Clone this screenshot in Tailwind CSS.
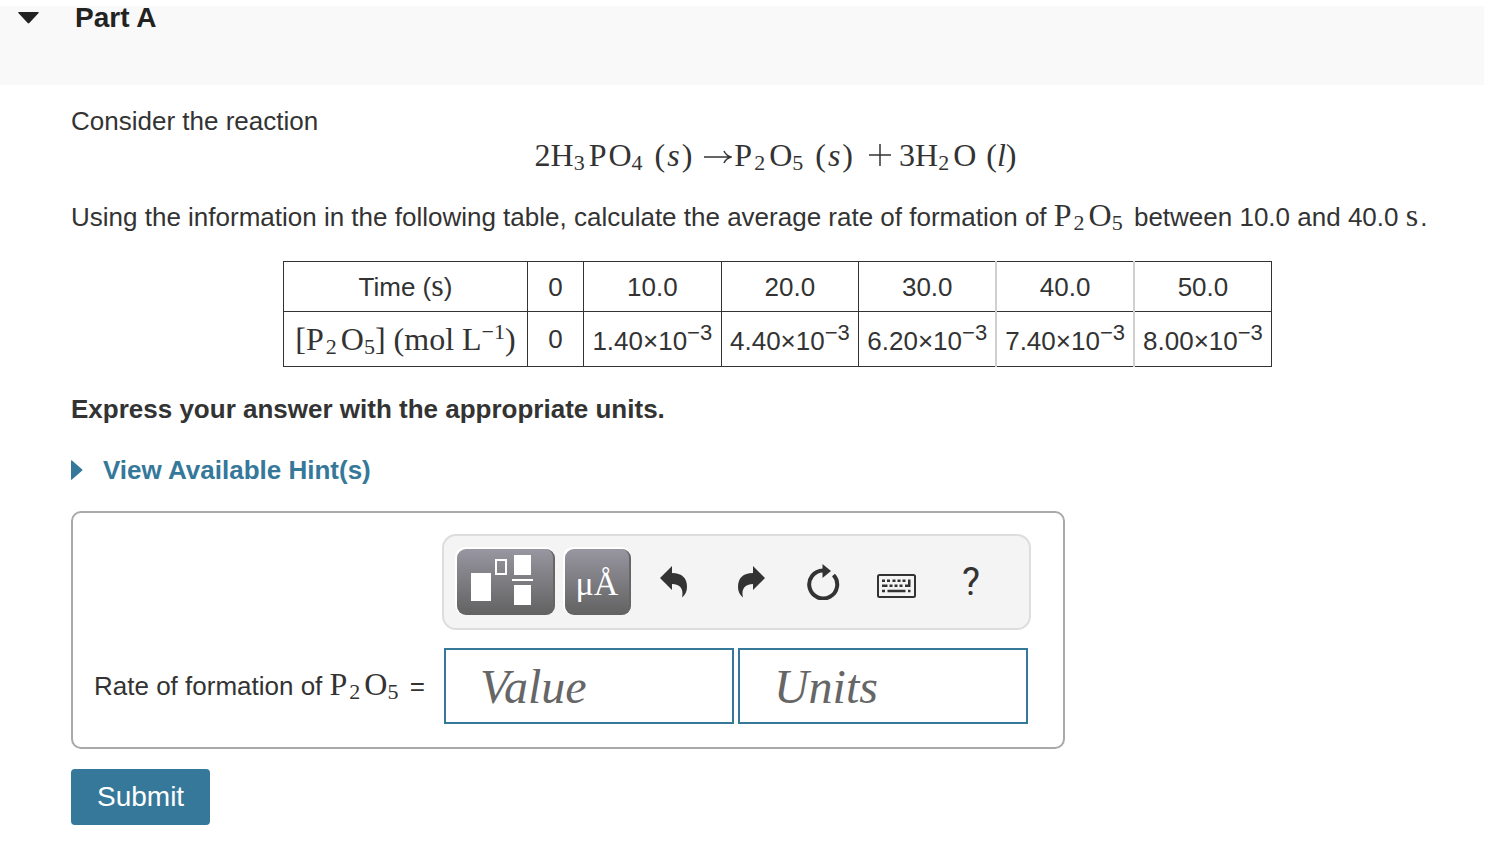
<!DOCTYPE html>
<html lang="en">
<head>
  <meta charset="UTF-8">
  <meta name="viewport" content="width=device-width, initial-scale=1">
  <title>Part A</title>
  <script src="https://cdn.jsdelivr.net/npm/@tailwindcss/browser@4"></script>
</head>
<body class="bg-white font-['Liberation_Sans',Arial,sans-serif] text-[26px] leading-9 text-[#333]">
  <!-- Part header -->
  <header class="mt-1.5 mr-[18px] h-[79px] bg-[#f9f9f9]">
    <button type="button" class="flex items-center pl-[18px] h-6 text-[28px] font-bold text-[#222]" aria-expanded="true">
      <svg class="w-[21px] h-3 mr-9" viewBox="0 0 21 12" fill="currentColor"><path d="M1 0h19q1.500 0 .4 1.300L11.300 11q-.8.900-1.600 0L.6 1.300Q-.5 0 1 0z"/></svg>
      Part A
    </button>
  </header>

  <main class="pl-[71px] pr-[18px] pt-[18px] pb-6">
    <p>Consider the reaction</p>
    <!-- Reaction -->
    <p class="flex justify-center items-baseline pb-1 pr-1 font-['Liberation_Serif',serif] text-[32px] leading-8 whitespace-nowrap">
      <span>2H<sub class="-bottom-1 text-[22px] mr-1">3</sub>P<span class="ml-0.5">O</span><sub class="-bottom-1 text-[22px]">4</sub></span>
      <span class="ml-3">(<i class="mx-0.5">s</i>)</span>
      <svg class="w-7 h-4 ml-3 mr-0.5" viewBox="0 0 28 16" fill="none" stroke="currentColor" stroke-width="1.500"><path d="M0 7h27M20 1q2 4.500 7 6-5 1.500-7 6"/></svg>
      <span>P<sub class="-bottom-1 text-[22px] ml-0.5 mr-1">2</sub>O<sub class="-bottom-1 text-[22px]">5</sub></span>
      <span class="ml-3">(<i class="mx-0.5">s</i>)</span>
      <svg class="w-[22px] h-[22px] ml-4 mr-2 self-center" viewBox="0 0 22 22" fill="none" stroke="currentColor" stroke-width="1.500"><path d="M11 0v22M0 11h22"/></svg>
      <span>3H<sub class="-bottom-1 text-[22px] mr-1">2</sub>O</span>
      <span class="ml-2.5">(<i>l</i>)</span>
    </p>
    <p class="mt-6">Using the information in the following table, calculate the average rate of formation of <span class="font-['Liberation_Serif',serif] text-[32px] leading-none">P<sub class="-bottom-1 text-[22px] ml-0.5 mr-1">2</sub>O<sub class="-bottom-1 text-[22px] mr-1">5</sub></span> between 10.0 and 40.0 <span class="mr-0.5 font-['Liberation_Serif',serif] text-[32px] leading-none">s</span>.</p>

    <!-- Data -->
    <table class="mx-auto mt-[26px] table-fixed w-[989px] border-collapse border border-[#333] text-center whitespace-nowrap">
      <colgroup>
        <col class="w-[244px]">
        <col class="w-14">
        <col span="5">
      </colgroup>
      <tbody>
        <tr class="h-[50px] border-b border-[#333]">
          <th scope="row" class="font-normal border-r border-[#333]">Time (<span class="font-['Liberation_Serif',serif] text-[32px] leading-none">s</span>)</th>
          <td class="border-r border-[#333]">0</td>
          <td class="border-r border-[#333]">10.0</td>
          <td class="border-r border-[#333]">20.0</td>
          <td class="border-r-2 border-r-[#d0d0d0]">30.0</td>
          <td class="border-r-2 border-r-[#d0d0d0]">40.0</td>
          <td>50.0</td>
        </tr>
        <tr class="h-[55px]">
          <th scope="row" class="font-normal border-r border-[#333] font-['Liberation_Serif',serif] text-[32px]">[P<sub class="-bottom-1 text-[22px] ml-0.5 mr-1">2</sub>O<sub class="-bottom-1 text-[22px]">5</sub>] (mol L<sup class="text-[22px]">−1</sup>)</th>
          <td class="border-r border-[#333]">0</td>
          <td class="pt-1 border-r border-[#333]">1.40×10<sup class="-top-2.5 text-[22px]">−3</sup></td>
          <td class="pt-1 border-r border-[#333]">4.40×10<sup class="-top-2.5 text-[22px]">−3</sup></td>
          <td class="pt-1 border-r-2 border-r-[#d0d0d0]">6.20×10<sup class="-top-2.5 text-[22px]">−3</sup></td>
          <td class="pt-1 border-r-2 border-r-[#d0d0d0]">7.40×10<sup class="-top-2.5 text-[22px]">−3</sup></td>
          <td class="pt-1">8.00×10<sup class="-top-2.5 text-[22px]">−3</sup></td>
        </tr>
      </tbody>
    </table>

    <p class="mt-6 font-bold">Express your answer with the appropriate units.</p>
    <button type="button" class="mt-[25px] flex items-center font-bold text-[#35789a]" aria-expanded="false">
      <svg class="w-3 h-5 mr-5" viewBox="0 0 12 20" fill="currentColor"><path d="M0 1Q0-.5 1 .6l10 8.600q.9.800 0 1.600L1 19.400Q0 20.500 0 19z"/></svg>
      View Available Hint(s)
    </button>

    <!-- Answer -->
    <form>
      <div class="mt-[23px] w-fit border-2 border-[#a9a9a9] rounded-[10px] pl-[21px] pr-8 pt-[21px] pb-[23px] grid grid-cols-[auto_auto] gap-x-[17px] gap-y-[18px]">
        <div class="col-start-2 h-24 flex items-center rounded-[14px] border-2 border-[#ddd] bg-[#f4f4f4] pl-[13px] text-[#333]">
          <button type="button" aria-label="Templates" class="w-[98px] h-[66px] rounded-[9px] bg-linear-to-b from-[#9896a0] to-[#626262] border-r-2 border-[#666] shadow-[-1px_-1px_0_1px_#fff]">
            <svg class="w-[98px] h-[66px]" viewBox="0 0 98 66" fill="#fff"><path d="M14 24h20v28H14zM57 6h17v20H57zM57 36h17v20H57zM55 30h21v2H55z"/><path d="M39 11h10v14H39z" fill="none" stroke="#fff" stroke-width="2"/></svg>
          </button>
          <button type="button" aria-label="Units" class="ml-2.5 w-[66px] h-[66px] pt-1 rounded-[9px] bg-linear-to-b from-[#9896a0] to-[#626262] border-r-2 border-[#666] shadow-[-1px_-1px_0_1px_#fff] font-['Liberation_Serif',serif] text-[34px] leading-none text-white">μÅ</button>
          <button type="button" aria-label="Undo" class="ml-[29px]">
            <svg class="w-7 h-8" viewBox="0 0 28 32" fill="currentColor"><path d="M12 0v7c10 0 15 5 15 14 0 4-1.500 8-5 10.500 2-8.500-2-13.500-10-13.500v6L0 12z"/></svg>
          </button>
          <button type="button" aria-label="Redo" class="ml-[50px]">
            <svg class="w-7 h-8" viewBox="0 0 28 32" fill="currentColor"><path d="M15 0v7C5 7 0 12 0 21c0 4 1.500 8 5 10.500-2-8.500 2-13.500 10-13.500v6l12-12z"/></svg>
          </button>
          <button type="button" aria-label="Reset" class="ml-[39px]">
            <svg class="w-9 h-9" viewBox="0 0 36 36"><path d="M18 6.500A14 14 0 1 0 28.500 11" fill="none" stroke="currentColor" stroke-width="4"/><path d="M17.500 0L26 7l-8.500 7z" fill="currentColor"/></svg>
          </button>
          <button type="button" aria-label="Keyboard" class="ml-9 mt-2">
            <svg class="w-[39px] h-6" viewBox="0 0 39 24" fill="currentColor"><rect x="1" y="1" width="37" height="22" rx="1.500" fill="none" stroke="currentColor" stroke-width="2"/><path d="M5 5.500h3v2.500H5zM10 5.500h3v2.500h-3zM15.500 5.500h3v2.500h-3zM20.500 5.500h3v2.500h-3zM25.500 5.500h3v2.500h-3zM31 5.500h2.500V13H28v-2.500h3zM5 10.500h5.500V13H5zM12.500 10.500h3V13h-3zM17.500 10.500h3V13h-3zM22.500 10.500h3V13h-3zM5 15.800h3v2.500H5zM10.500 15.800h18v2.500h-18zM31 15.800h2.500v2.500H31z"/></svg>
          </button>
          <button type="button" aria-label="Help" class="ml-[46px] font-[Roboto,sans-serif] text-[38px] leading-none">?</button>
        </div>
        <label for="value" class="self-center whitespace-nowrap">Rate of formation of <span class="font-['Liberation_Serif',serif] text-[32px] leading-none">P<sub class="-bottom-1 text-[22px] ml-0.5 mr-1">2</sub>O<sub class="-bottom-1 text-[22px] mr-1">5</sub></span> =</label>
        <div class="flex gap-1 pl-0.5 pr-[3px]">
          <input id="value" type="text" placeholder="Value" class="w-[290px] h-[76px] border-2 border-[#35789a] pl-[34px] font-['Liberation_Serif',serif] italic text-5xl placeholder:text-[#666]">
          <input id="units" type="text" placeholder="Units" aria-label="Units" class="w-[290px] h-[76px] border-2 border-[#35789a] pl-[34px] font-['Liberation_Serif',serif] italic text-5xl placeholder:text-[#666]">
        </div>
      </div>
      <button type="submit" class="mt-5 h-14 px-[26px] rounded bg-[#35789a] text-[28px] text-white">Submit</button>
    </form>
  </main>
</body>
</html>
